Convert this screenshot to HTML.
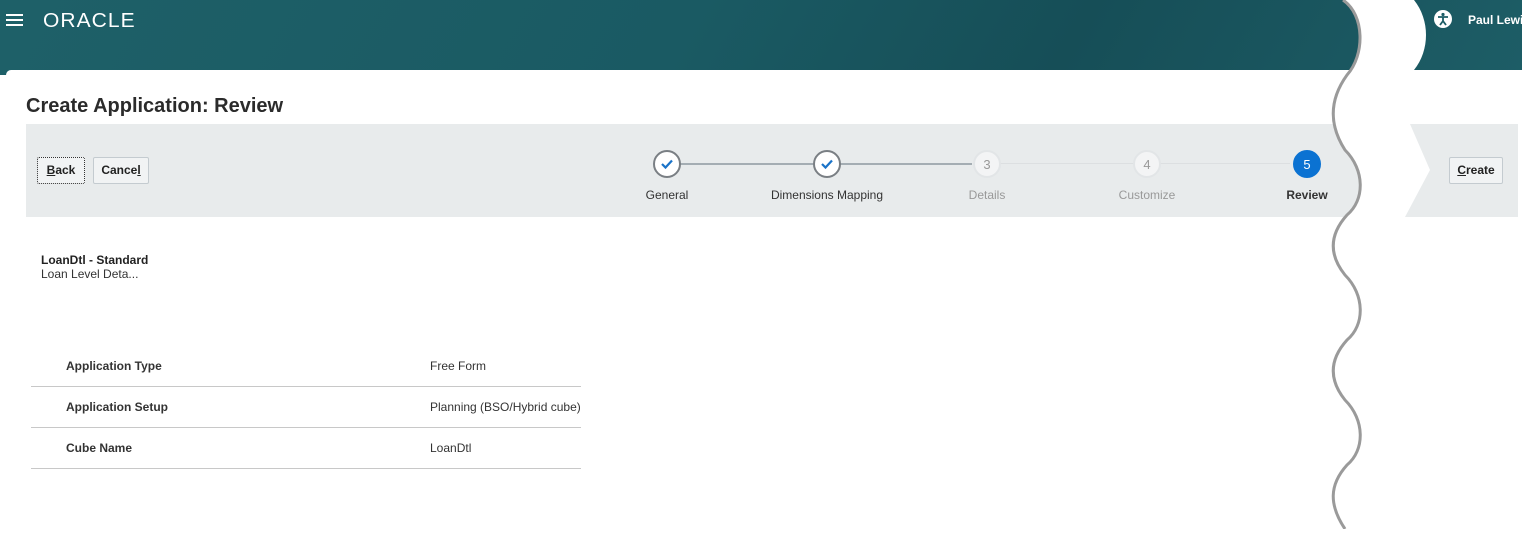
<!DOCTYPE html>
<html><head><style>
*{margin:0;padding:0;box-sizing:border-box}
body{width:1522px;height:529px;overflow:hidden;background:#fff;font-family:"Liberation Sans",Arial,sans-serif;position:relative}
.hdr{position:absolute;left:0;top:0;width:1522px;height:75px;background:linear-gradient(120deg,#1e6068 0%,#1a5a63 45%,#164e57 70%,#1d5d66 100%)}
.card{position:absolute;left:6px;top:70px;width:1530px;height:470px;background:#fff;border-radius:5px}
h1{position:absolute;left:26px;top:95px;font-size:20px;font-weight:bold;color:#2b2b2b}
.tb{position:absolute;left:26px;top:124px;width:1492px;height:93px;background:#e8ebec}
.btn{position:absolute;height:27px;border:1px solid #c4cbd0;background:#f1f3f4;border-radius:2px;font-size:12px;font-weight:bold;color:#222;line-height:25px;text-align:center}
.st{position:absolute;text-align:center;font-size:12px;color:#333;width:160px}
.c{position:absolute;width:28px;height:28px;border-radius:50%;font-size:13px;text-align:center;line-height:26px}
.row{position:absolute;left:31px;width:550px;height:41px;border-bottom:1px solid #c8c8c8;font-size:12px;color:#333}
.row b{position:absolute;left:35px;top:13px}
.row span{position:absolute;left:399px;top:13px}
</style></head><body>
<div class="hdr"></div>
<div style="position:absolute;left:6px;top:14px;width:17px;height:2px;background:#fff;box-shadow:0 5px 0 #fff,0 10px 0 #fff"></div>
<div style="position:absolute;left:43px;top:10px;font-size:20px;color:#fff;letter-spacing:1px;transform:scaleX(1.05);transform-origin:left">ORACLE</div>
<svg style="position:absolute;left:1433px;top:9px" width="20" height="20" viewBox="0 0 20 20"><circle cx="10" cy="10" r="9" fill="#fff"/><circle cx="10" cy="5.5" r="1.6" fill="#1d5d66"/><path d="M5 8h10M10 8v4M10 12l-3 4M10 12l3 4" stroke="#1d5d66" stroke-width="1.8" fill="none"/></svg>
<div style="position:absolute;left:1468px;top:13px;font-size:12px;font-weight:bold;color:#fff;white-space:nowrap">Paul Lewis</div>
<div class="card"></div>
<h1>Create Application: Review</h1>
<div class="tb"></div>
<div class="btn" style="left:37px;top:157px;width:48px;border:1px dotted #333"><u>B</u>ack</div>
<div class="btn" style="left:93px;top:157px;width:56px">Cance<u>l</u></div>
<div style="position:absolute;left:680px;top:163px;width:292px;height:2px;background:#a4adb3"></div>
<div style="position:absolute;left:1000px;top:163px;width:290px;height:1px;background:#dcdfe1"></div>
<div class="c" style="left:653px;top:150px;background:#fff;border:2px solid #7a7f84"><svg width="14" height="12" viewBox="0 0 14 12" style="margin-top:6px"><path d="M2 6l3.5 3.5L12 2.5" stroke="#1a73c8" stroke-width="2.2" fill="none"/></svg></div>
<div class="c" style="left:813px;top:150px;background:#fff;border:2px solid #7a7f84"><svg width="14" height="12" viewBox="0 0 14 12" style="margin-top:6px"><path d="M2 6l3.5 3.5L12 2.5" stroke="#1a73c8" stroke-width="2.2" fill="none"/></svg></div>
<div class="c" style="left:973px;top:150px;background:#f3f4f5;border:2px solid #e2e5e7;color:#999">3</div>
<div class="c" style="left:1133px;top:150px;background:#f3f4f5;border:2px solid #e2e5e7;color:#999">4</div>
<div class="c" style="left:1293px;top:150px;background:#0b72d2;border:2px solid #0b72d2;color:#fff">5</div>
<div class="st" style="left:587px;top:188px">General</div>
<div class="st" style="left:747px;top:188px">Dimensions Mapping</div>
<div class="st" style="left:907px;top:188px;color:#999">Details</div>
<div class="st" style="left:1067px;top:188px;color:#999">Customize</div>
<div class="st" style="left:1227px;top:188px;font-weight:bold">Review</div>
<svg style="position:absolute;left:0;top:0" width="1522" height="529">
<path d="M1344 0 C1366 15,1366 55,1348 75 C1330 100,1330 125,1346 150 C1366 170,1366 200,1348 215 C1330 235,1330 255,1346 275 C1366 295,1366 325,1348 340 C1330 360,1330 380,1346 400 C1366 420,1366 450,1348 465 C1330 485,1330 505,1346 529 L1522 529 L1522 217 L1405 217 L1430 170 L1410 124 L1522 124 L1522 70 L1414 70 C1430 50,1430 20,1414 0 Z" fill="#fff"/>
<path d="M1344 0 C1366 15,1366 55,1348 75 C1330 100,1330 125,1346 150 C1366 170,1366 200,1348 215 C1330 235,1330 255,1346 275 C1366 295,1366 325,1348 340 C1330 360,1330 380,1346 400 C1366 420,1366 450,1348 465 C1330 485,1330 505,1346 529" stroke="#9a9a9a" stroke-width="3" fill="none" transform="translate(-1,0)"/>
</svg>
<div class="btn" style="left:1449px;top:157px;width:54px"><u>C</u>reate</div>
<div style="position:absolute;left:41px;top:253px;font-size:12px;font-weight:bold;color:#222">LoanDtl - Standard</div>
<div style="position:absolute;left:41px;top:267px;font-size:12px;color:#333">Loan Level Deta...</div>
<div class="row" style="top:346px"><b>Application Type</b><span>Free Form</span></div>
<div class="row" style="top:387px"><b>Application Setup</b><span>Planning (BSO/Hybrid cube)</span></div>
<div class="row" style="top:428px"><b>Cube Name</b><span>LoanDtl</span></div>
</body></html>
